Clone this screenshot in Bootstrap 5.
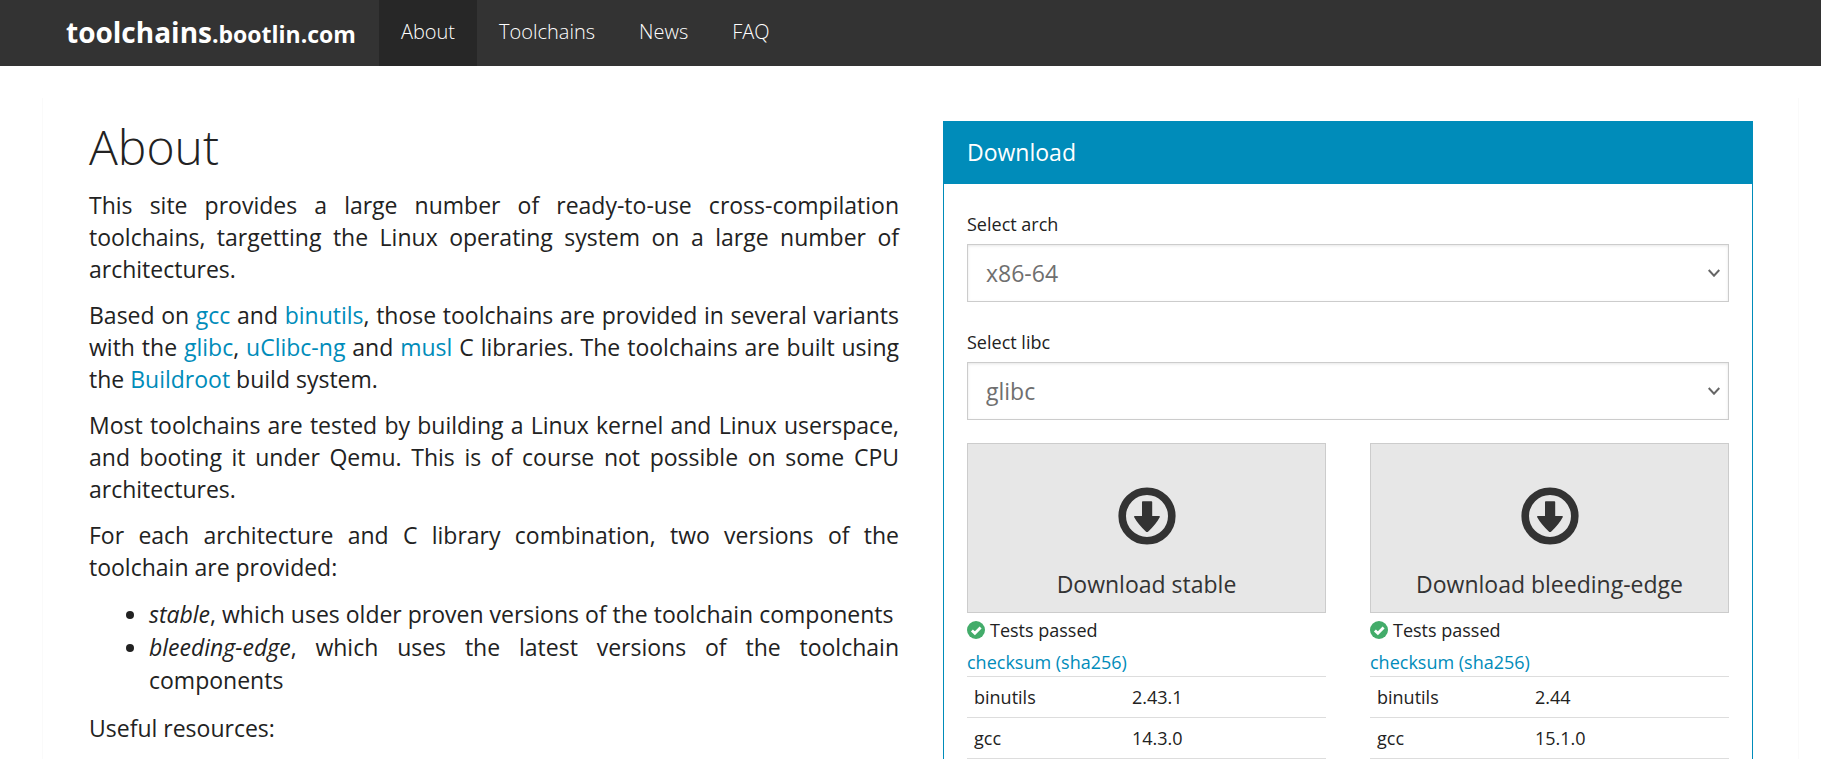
<!DOCTYPE html>
<html lang="en">
<head>
<meta charset="utf-8">
<meta name="viewport" content="width=device-width, initial-scale=1">
<title>toolchains.bootlin.com</title>
<link href="https://cdn.jsdelivr.net/npm/bootstrap@5.3.0/dist/css/bootstrap.min.css" rel="stylesheet">
<style>
  body { font-family: "Open Sans", sans-serif; font-size: 18px; line-height: 32px; color: #222; background: #fff; }
  a { color: #008cba; text-decoration: none; }
  a:hover { text-decoration: underline; }
  .site-nav { background: #333; padding: 0 44px; }
  .site-nav .navbar-brand { font-size: 23px; font-weight: 700; line-height: 32px; padding: 18px 23px 16px 22px; margin: 0; color: #fff; }
  .brand-main { font-size: 28px; line-height: 20px; }
  .site-nav .navbar-nav .nav-link { font-size: 20px; font-weight: 300; line-height: 32px; padding: 16px 22px 18px; color: #fff; }
  .site-nav .navbar-nav .nav-link.active { background: #272727; }
  .page-box { margin: 32px 22px 0 42px; padding: 23px 23px 23px 24px; border: solid #fafafa; border-width: 0 1px; }
  .page-box > .row { --bs-gutter-x: 44px; margin: 0; }
  .intro { font-size: 23px; line-height: 32px; text-align: justify; }
  .intro h1 { font-size: 48px; font-weight: 300; line-height: 52px; margin: 0 0 16px; }
  .intro p { margin-bottom: 14px; }
  .intro ul { margin: 15px 0; padding-left: 60px; }
  .intro li { line-height: 33px; }
  .download-panel { border: 1px solid #008cba; border-radius: 0; }
  .download-panel .card-header { background: #008cba; color: #fff; font-size: 23px; line-height: 32px; padding: 14px 23px 16px; border: 0; border-radius: 0; }
  .download-panel .card-body { padding: 23px; }
  .download-panel .form-label { display: block; line-height: 28px; margin: 0 0 6px; padding-top: 3px; }
  .download-panel .form-select { height: 58px; font-size: 23px; line-height: 32px; color: #6f6f6f; border: 1px solid #ccc; border-radius: 0; padding: 12px 36px 12px 18px; box-shadow: inset 0 1px 3px rgba(0,0,0,.1); background-color: #fff; background-image: url("data:image/svg+xml,%3Csvg xmlns='http://www.w3.org/2000/svg' viewBox='0 0 12 8'%3E%3Cpath d='M.7 1 6 6.7 11.3 1' fill='none' stroke='%23666' stroke-width='2'/%3E%3C/svg%3E"); background-size: 12px 8px; background-position: right 8px center; }
  .field { margin-bottom: 23px; }
  .downloads { --bs-gutter-x: 44px; }
  .btn-download { background: #e7e7e7; border: 1px solid #ccc; border-radius: 0; color: #333; font-size: 23px; line-height: 32px; padding: 43px 12px 12px; }
  .btn-download svg { display: block; margin: 0 auto 23px; }
  .status svg { margin-right: 5px; }
  .status { padding-top: 1px; }
  .checksum { line-height: 28px; padding-top: 2px; }
  .versions { margin: 0; color: #222; line-height: 24px; }
  .versions td { padding: 8px 7px; border: 0; border-top: 1px solid #ddd; }
  .versions tr:last-child td { border-bottom: 1px solid #ddd; }
  .versions td:first-child { width: 44%; }
</style>
</head>
<body class="vh-100 overflow-hidden">
<svg class="d-none" aria-hidden="true">
  <symbol id="icon-download" viewBox="0 0 58 58">
    <circle cx="29" cy="29" r="24.8" fill="none" stroke="currentColor" stroke-width="7.6"/>
    <path fill="currentColor" d="M24.800 14.300h8.600q.8 0 .8.800v14h6.800q1.300 0 .7 1.200-3.600 6.900-11.400 14.200-1.300 1.200-2.500 0Q20 37.200 16.200 30.300q-.6-1.200.7-1.200H24V15.100q0-.8.800-.8z"/>
  </symbol>
  <symbol id="icon-check" viewBox="0 0 18 18">
    <circle cx="9" cy="9" r="9" fill="#43ac6a"/>
    <path d="m4.900 9.400 3 2.900 5.700-5.700" fill="none" stroke="#fff" stroke-width="2.800"/>
  </symbol>
</svg>
<nav class="navbar navbar-expand site-nav" aria-label="Main">
  <a class="navbar-brand" href="#"><span class="brand-main">toolchains</span>.bootlin.com</a>
  <ul class="navbar-nav">
    <li class="nav-item"><a class="nav-link active" aria-current="page" href="#">About</a></li>
    <li class="nav-item"><a class="nav-link" href="#">Toolchains</a></li>
    <li class="nav-item"><a class="nav-link" href="#">News</a></li>
    <li class="nav-item"><a class="nav-link" href="#">FAQ</a></li>
  </ul>
</nav>
<main class="page-box">
  <div class="row">
    <section class="col-6 intro">
      <h1>About</h1>
      <p>This site provides a large number of ready-to-use cross-compilation toolchains, targetting the Linux operating system on a large number of architectures.</p>
      <p>Based on <a href="#">gcc</a> and <a href="#">binutils</a>, those toolchains are provided in several variants with the <a href="#">glibc</a>, <a href="#">uClibc-ng</a> and <a href="#">musl</a> C libraries. The toolchains are built using the <a href="#">Buildroot</a> build system.</p>
      <p>Most toolchains are tested by building a Linux kernel and Linux userspace, and booting it under Qemu. This is of course not possible on some CPU architectures.</p>
      <p>For each architecture and C library combination, two versions of the toolchain are provided:</p>
      <ul>
        <li><em>stable</em>, which uses older proven versions of the toolchain components</li>
        <li><em>bleeding-edge</em>, which uses the latest versions of the toolchain components</li>
      </ul>
      <p>Useful resources:</p>
    </section>
    <section class="col-6">
      <div class="card download-panel">
        <div class="card-header">Download</div>
        <div class="card-body">
          <div class="field">
            <label class="form-label" for="arch">Select arch</label>
            <select class="form-select" id="arch"><option>x86-64</option></select>
          </div>
          <div class="field">
            <label class="form-label" for="libc">Select libc</label>
            <select class="form-select" id="libc"><option>glibc</option></select>
          </div>
          <div class="row downloads">
            <div class="col-6">
              <button type="button" class="btn btn-download w-100"><svg width="58" height="58" aria-hidden="true"><use href="#icon-download"/></svg>Download stable</button>
              <div class="status d-flex align-items-center"><svg width="18" height="18" aria-hidden="true"><use href="#icon-check"/></svg>Tests passed</div>
              <a class="checksum d-block" href="#">checksum (sha256)</a>
              <table class="table versions">
                <tbody>
                  <tr><td>binutils</td><td>2.43.1</td></tr>
                  <tr><td>gcc</td><td>14.3.0</td></tr>
                </tbody>
              </table>
            </div>
            <div class="col-6">
              <button type="button" class="btn btn-download w-100"><svg width="58" height="58" aria-hidden="true"><use href="#icon-download"/></svg>Download bleeding-edge</button>
              <div class="status d-flex align-items-center"><svg width="18" height="18" aria-hidden="true"><use href="#icon-check"/></svg>Tests passed</div>
              <a class="checksum d-block" href="#">checksum (sha256)</a>
              <table class="table versions">
                <tbody>
                  <tr><td>binutils</td><td>2.44</td></tr>
                  <tr><td>gcc</td><td>15.1.0</td></tr>
                </tbody>
              </table>
            </div>
          </div>
        </div>
      </div>
    </section>
  </div>
</main>
<script src="https://cdn.jsdelivr.net/npm/bootstrap@5.3.0/dist/js/bootstrap.bundle.min.js"></script>
</body>
</html>
